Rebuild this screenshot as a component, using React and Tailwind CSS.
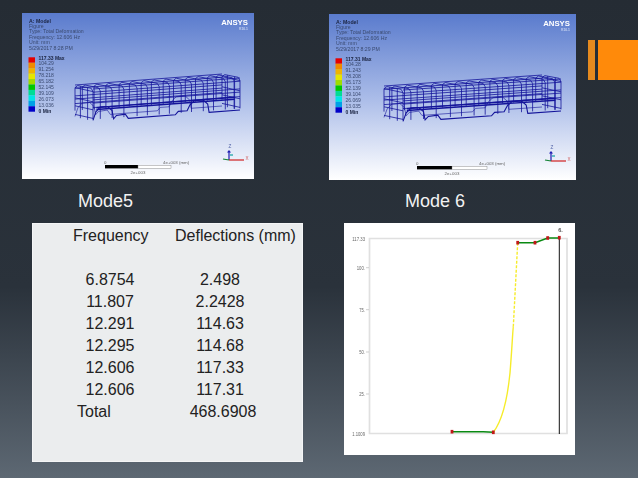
import React from "react";

const LEGEND_COLORS = ["#e60000", "#f08a00", "#f0b400", "#e6e600", "#a0dc00", "#00c800", "#00dc96", "#00e6e6", "#00a0e6", "#0000c8"];

// pieces of the wireframe, in bus coordinates: u along, v across, w up
const POSTS = [0, 0.05, 0.13, 0.21, 0.3, 0.37, 0.45, 0.52, 0.6, 0.67, 0.75, 0.82, 0.9, 0.96, 1];
const RAILS = [0.42, 0.56, 0.66, 0.9, 1];
const THICK_RAILS = [0.3, 0.36];

const Bus = ({ x, y, ux, vx }) => {
  const p = (u, v, w) => [x + u * ux + v * vx, y - u * 11 - v * 4 - w * 32];
  const seg = (a, b) => {
    const [x1, y1] = p(...a);
    const [x2, y2] = p(...b);
    return `M${x1.toFixed(1)} ${y1.toFixed(1)}L${x2.toFixed(1)} ${y2.toFixed(1)}`;
  };

  // bottom skirt with the wheel arches cut out
  const skirt = (v) => {
    const pts = [
      [0, 0.02], [0.02, 0.28], [0.05, 0.42], [0.1, 0.42], [0.13, 0.28], [0.14, 0.02], [0.16, 0.12],
      [0.22, 0.14], [0.24, 0], [0.56, 0], [0.58, 0.1], [0.64, 0.1], [0.66, 0.28], [0.69, 0.4],
      [0.75, 0.4], [0.78, 0.26], [0.79, 0], [1, 0],
    ];
    return "M" + pts.map(([u, w]) => p(u, v, w).map((n) => n.toFixed(1)).join(" ")).join("L");
  };

  const thin = [];
  POSTS.forEach((u) => {
    thin.push(seg([u, 0, 0.05], [u, 0, 0.92]));
    thin.push(seg([u, 0, 0.92], [u + 0.006, 0.15, 1]));
    thin.push(seg([u + 0.006, 0.15, 1], [u, 0.85, 1]));
    thin.push(seg([u, 1, 0.2], [u, 1, 0.92]));
    thin.push(seg([u, 0.85, 1], [u, 1, 0.92]));
  });
  RAILS.forEach((w) => {
    thin.push(seg([0, 0, w], [1, 0, w]));
    thin.push(seg([0, 1, w], [1, 1, w]));
  });
  [0, 1].forEach((u) => {
    [0.08, 0.35, 0.6, 0.92].forEach((w) => thin.push(seg([u, 0, w], [u, 1, w])));
    [0.3, 0.7].forEach((v) => thin.push(seg([u, v, 0], [u, v, 1])));
  });

  return (
    <g fill="none" stroke="#14149a">
      <path d={thin.join("")} strokeWidth="0.8" />
      <path d={skirt(0)} strokeWidth="1.1" />
      <path d={skirt(1)} strokeWidth="0.6" />
      <path d={THICK_RAILS.map((w) => seg([0.06, 0.3, w], [1, 0.3, w])).join("")} strokeWidth="1.4" />
    </g>
  );
};

const AnsysFigure = ({ width, id, lines, values, maxLabel, busX, busUx, busVx, barX, barW }) => (
  <svg width={width} height="166" viewBox={`0 0 ${width} 166`} className="block blur-[0.35px]">
    <defs>
      <linearGradient id={id} x1="0" y1="0" x2="0" y2="1">
        <stop offset="0" stopColor="#5a7bcd" />
        <stop offset="0.5" stopColor="#a9bbe8" />
        <stop offset="1" stopColor="#ffffff" />
      </linearGradient>
    </defs>
    <rect width={width} height="166" fill={`url(#${id})`} />

    <g fontFamily="Liberation Sans, sans-serif" fontSize="5.2" fill="#3a4a70">
      <text x="7" y="9.5" fontWeight="700" fill="#1a2340">A: Model</text>
      {lines.map((t, i) => (
        <text key={t} x="7" y={15 + i * 5.4}>{t}</text>
      ))}
    </g>
    <g fontFamily="Liberation Sans, sans-serif" fontSize="5" fill="#3a4a70">
      <text x="16.5" y="46.5" fontWeight="700" fill="#1a2340">{maxLabel}</text>
      {values.map((t, i) => (
        <text key={t} x="16.5" y={52 + i * 5.97}>{t}</text>
      ))}
      <text x="16.5" y="99.5" fontWeight="700" fill="#1a2340">0 Min</text>
    </g>
    {LEGEND_COLORS.map((c, i) => (
      <rect key={c} x="6.5" y={44.3 + i * 5.44} width="6.5" height="5.44" fill={c} />
    ))}

    <text x={width - 6} y="12" textAnchor="end" fontFamily="Liberation Sans, sans-serif" fontWeight="700" fontSize="7.8" fill="#ffffff">ANSYS</text>
    <text x={width - 6} y="17" textAnchor="end" fontFamily="Liberation Sans, sans-serif" fontSize="3.4" fill="#dfe6f7">R16.1</text>

    <Bus x={busX} y="108" ux={busUx} vx={busVx} />

    {/* scale bar */}
    <rect x={barX} y="152" width={barW / 2} height="3.4" fill="#000000" />
    <rect x={barX + barW / 2} y="152.4" width={barW / 2} height="2.8" fill="#ffffff" stroke="#777777" strokeWidth="0.4" />
    <g fontFamily="Liberation Sans, sans-serif" fontSize="4.4" fill="#666666">
      <text x={barX - 1} y="150.5">0</text>
      <text x={barX + barW - 8} y="151">4e+003 (mm)</text>
      <text x={barX + barW / 2} y="160.5" textAnchor="middle">2e+003</text>
    </g>

    {/* axis triad */}
    <g transform={`translate(${width - 25} 147)`} strokeWidth="1.2" fill="none">
      <path d="M0 0V-8" stroke="#1a1ab0" />
      <path d="M0 0H15" stroke="#d02020" />
      <path d="M0 0L-6 -1" stroke="#108030" />
      <path d="M1 -5H4" stroke="#10a0a0" />
      <path d="M-2 -7.5L0 -10L2 -7.5Z" fill="#1a1ab0" stroke="none" />
      <text x="1" y="-12" textAnchor="middle" fontSize="4.6" fill="#5566aa" stroke="none" fontFamily="Liberation Sans, sans-serif">Z</text>
      <text x="18" y="-0.5" textAnchor="middle" fontSize="4.6" fill="#d06060" stroke="none" fontFamily="Liberation Sans, sans-serif">X</text>
    </g>
  </svg>
);

const AXIS_LABELS = [
  ["117.33", 17.5, 12.7],
  ["100.", 46.5, 8.3],
  ["75.", 88.5, 5.7],
  ["50.", 130.5, 5.7],
  ["25.", 172.5, 5.7],
  ["1.1009", 212.5, 12.7],
];

const DeflectionChart = () => (
  <svg width="231" height="232" viewBox="0 0 231 232" className="block blur-[0.3px]">
    <path d="M25.5 15.5H223V210.5H25.5Z" fill="none" stroke="#e0e0e0" strokeWidth="1.7" />
    <g fontFamily="Liberation Sans, sans-serif" fontSize="6.2" fill="#666666">
      {AXIS_LABELS.map(([t, y, w]) => (
        <text key={t} x={21 - w} y={y} textLength={w} lengthAdjust="spacingAndGlyphs">{t}</text>
      ))}
    </g>
    <path d="M22 44.7H25M22 86.7H25M22 129H25M22 171H25" stroke="#bbbbbb" strokeWidth="0.7" />
    <path d="M149.3 209.3C158 198 163 180 166 150C168 125 169 104 169.3 103.7" fill="none" stroke="#f6ec2a" strokeWidth="1.4" />
    <path d="M169.3 103.7L173.7 19.7" fill="none" stroke="#f6ec2a" strokeWidth="1.4" strokeDasharray="3 1.5" />
    <path d="M108 208.7H139.3L149.3 209.3" fill="none" stroke="#0a8a12" strokeWidth="1.6" />
    <path d="M173.7 19.7H191L203.7 15H215.3" fill="none" stroke="#0a8a12" strokeWidth="1.6" />
    <path d="M215.3 14.7V211" stroke="#111111" strokeWidth="1" />
    <text x="216.5" y="9" textAnchor="middle" fontFamily="Liberation Sans, sans-serif" fontSize="5.5" fontWeight="700" fill="#555555">6.</text>
    {[[108, 208.7], [149.3, 209.3], [173.7, 19.7], [191, 19.7], [203.7, 15], [215.3, 14.7]].map(([x, y]) => (
      <rect key={x} x={x - 1.4} y={y - 1.8} width="2.8" height="3.6" fill="#c01818" />
    ))}
  </svg>
);

const ROWS = [
  ["6.8754", "2.498"],
  ["11.807", "2.2428"],
  ["12.291", "114.63"],
  ["12.295", "114.68"],
  ["12.606", "117.33"],
  ["12.606", "117.31"],
];

export default function App() {
  return (
    <div className="w-[638px] h-[478px] overflow-hidden bg-linear-to-b from-[#252c34] via-[#2a323b] via-60% to-[#5d6873] font-['Liberation_Sans',sans-serif]">
      {/* figures and the orange accent */}
      <div className="flex items-start pt-[13px] pl-[22px]">
        <AnsysFigure
          id="sky-a"
          width={232}
          lines={["Figure", "Type: Total Deformation", "Frequency: 12.606 Hz", "Unit: mm", "5/29/2017 8:28 PM"]}
          maxLabel="117.33 Max"
          values={["104.29", "91.254", "78.218", "65.182", "52.145", "39.109", "26.073", "13.036"]}
          busX={71}
          busUx={147}
          busVx={-18}
          barX={83}
          barW={66}
        />
        <div className="ml-[75px] mt-px">
          <AnsysFigure
            id="sky-b"
            width={247}
            lines={["Figure", "Type: Total Deformation", "Frequency: 12.606 Hz", "Unit: mm", "5/29/2017 8:29 PM"]}
            maxLabel="117.31 Max"
            values={["104.28", "91.243", "78.208", "65.173", "52.139", "39.104", "26.069", "13.035"]}
            busX={74}
            busUx={158}
            busVx={-19}
            barX={88}
            barW={70}
          />
        </div>
        <div className="ml-[12px] mt-[27px] flex gap-[3px]">
          <div className="w-[7px] h-[40px] bg-[#e58a1f]" />
          <div className="w-[40px] h-[40px] bg-[#ff8a0a]" />
        </div>
      </div>

      {/* captions */}
      <div className="flex mt-[11px] text-[18px] leading-[21px] text-[#f2f2f2]">
        <p className="ml-[78px] w-[327px]">Mode5</p>
        <p>Mode 6</p>
      </div>

      {/* table and chart */}
      <div className="flex items-start mt-[11px] pl-[32px]">
        <div className="w-[271px] h-[239px] bg-[#ebedee] border border-[#f4f5f6] pl-[40px] pt-[1px] text-[16px] leading-[22px] text-[#222222]">
          <div className="flex whitespace-nowrap">
            <span className="w-[74px] text-center">Frequency</span>
            <span className="ml-[28px]">Deflections (mm)</span>
          </div>
          <div className="h-[22px]" />
          {ROWS.map(([freq, defl]) => (
            <div key={defl} className="flex">
              <span className="w-[74px] text-center">{freq}</span>
              <span className="ml-[28px] w-[90px] text-center">{defl}</span>
            </div>
          ))}
          <div className="flex">
            <span className="w-[74px] pl-[4px]">Total</span>
            <span className="ml-[28px] w-[96px] text-center">468.6908</span>
          </div>
        </div>
        <div className="ml-[41px] bg-white">
          <DeflectionChart />
        </div>
      </div>
    </div>
  );
}
